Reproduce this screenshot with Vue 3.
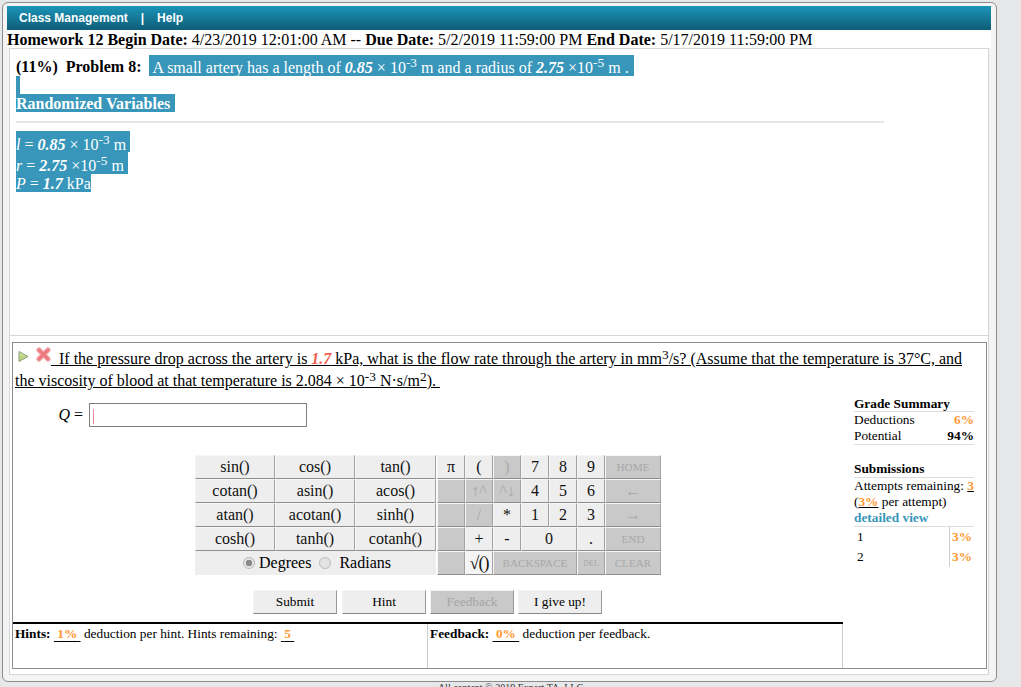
<script setup>
const fnRows = [
  ['sin()', 'cos()', 'tan()'],
  ['cotan()', 'asin()', 'acos()'],
  ['atan()', 'acotan()', 'sinh()'],
  ['cosh()', 'tanh()', 'cotanh()'],
]
const keys = [
  { t: 'π', c: 1 }, { t: '(', c: 1 }, { t: ')', c: 1, off: true }, { t: '7', c: 1 }, { t: '8', c: 1 }, { t: '9', c: 1 }, { t: 'HOME', c: 2, off: true, small: true },
  { t: '', c: 1, off: true }, { t: '↑^', c: 1, off: true }, { t: '^↓', c: 1, off: true }, { t: '4', c: 1 }, { t: '5', c: 1 }, { t: '6', c: 1 }, { t: '←', c: 2, off: true },
  { t: '', c: 1, off: true }, { t: '/', c: 1, off: true }, { t: '*', c: 1 }, { t: '1', c: 1 }, { t: '2', c: 1 }, { t: '3', c: 1 }, { t: '→', c: 2, off: true },
  { t: '', c: 1, off: true }, { t: '+', c: 1 }, { t: '-', c: 1 }, { t: '0', c: 2 }, { t: '.', c: 1 }, { t: 'END', c: 2, off: true, small: true },
  { t: '', c: 1, off: true }, { t: '√()', c: 1, big: true }, { t: 'BACKSPACE', c: 3, off: true, small: true }, { t: 'DEL', c: 1, off: true, tiny: true }, { t: 'CLEAR', c: 2, off: true, small: true },
]
</script>

<template>
  <div class="page">
    <nav class="nav"><span>Class Management</span><span class="sep">|</span><span>Help</span></nav>
    <div class="dates">
      <b>Homework 12 Begin Date:</b> 4/23/2019 12:01:00 AM -- <b>Due Date:</b> 5/2/2019 11:59:00 PM <b>End Date:</b> 5/17/2019 11:59:00 PM
    </div>
    <div class="frame">
      <section class="problem">
        <div class="statement">
          <b class="pct">(11%)&nbsp; Problem 8:</b>
          <span class="hl intro">A small artery has a length of <b><i>0.85</i></b> × 10<sup>-3</sup> m and a radius of <b><i>2.75</i></b> ×10<sup>-5</sup> m .</span>
        </div>
        <div class="hl stub"></div>
        <b class="hl heading">Randomized Variables</b>
        <hr class="rule" />
        <div class="vars">
          <span class="hl v1"><i>l</i> = <b><i>0.85</i></b> × 10<sup>-3</sup> m</span>
          <span class="hl v2"><i>r</i> = <b><i>2.75</i></b> ×10<sup>-5</sup> m</span>
          <span class="hl v3"><i>P</i> = <b><i>1.7</i></b> kPa</span>
        </div>
      </section>
      <section class="question">
        <p class="qtext">
          <svg class="play" width="11" height="13" viewBox="0 0 11 13"><defs><linearGradient id="pg" x1="0" y1="0" x2="0" y2="1"><stop offset="0" stop-color="#d6e8a8" /><stop offset="1" stop-color="#a8cc66" /></linearGradient></defs><path d="M1 1.500 10 6.500 1 11.500Z" fill="url(#pg)" stroke="#8f9f80" stroke-width="1" /></svg>
          <svg class="cross" width="15" height="15" viewBox="0 0 15 15"><path d="M3 3 12 12M12 3 3 12" fill="none" stroke="#f3bcbd" stroke-width="5.500" stroke-linecap="round" /><path d="M3 3 12 12M12 3 3 12" fill="none" stroke="#ec7a80" stroke-width="3.200" stroke-linecap="round" /></svg><u>&nbsp;&nbsp;If the pressure drop across the artery is <b class="red"><i>1.7</i></b> kPa, what is the flow rate through the artery in mm<sup>3</sup>/s? (Assume that the temperature is 37°C, and the viscosity of blood at that temperature is 2.084 × 10<sup>-3</sup> N·s/m<sup>2</sup>).&nbsp;</u>
        </p>
        <div class="body">
          <div class="main">
            <div class="answer">
              <span class="qlabel"><i>Q</i> =</span>
              <div class="input"><span class="caret"></span></div>
            </div>
            <div class="pad">
              <div class="fns">
                <div class="fngrid">
                  <template v-for="(row, r) in fnRows" :key="r">
                    <div v-for="f in row" :key="f" class="fn">{{ f }}</div>
                  </template>
                </div>
                <div class="modes">
                  <span class="radio on"></span><span class="mode">Degrees</span>
                  <span class="radio"></span><span class="mode">Radians</span>
                </div>
              </div>
              <div class="keys">
                <div
                  v-for="(k, i) in keys"
                  :key="i"
                  class="key"
                  :class="{ off: k.off, small: k.small, tiny: k.tiny, big: k.big, c2: k.c === 2, c3: k.c === 3 }"
                >{{ k.t }}</div>
              </div>
            </div>
            <div class="actions">
              <div class="btn">Submit</div>
              <div class="btn">Hint</div>
              <div class="btn dis">Feedback</div>
              <div class="btn">I give up!</div>
            </div>
            <div class="info">
              <div class="cell hints"><b>Hints:</b> <u class="val">&nbsp;<b>1%</b>&nbsp;</u> deduction per hint. Hints remaining: <u class="val">&nbsp;<b>5</b>&nbsp;</u></div>
              <div class="cell feedback"><b>Feedback:</b> <u class="val">&nbsp;<b>0%</b>&nbsp;</u> deduction per feedback.</div>
            </div>
          </div>
          <aside class="side">
            <h4>Grade Summary</h4>
            <div class="row"><span>Deductions</span><b class="or">6%</b></div>
            <div class="row last"><span>Potential</span><b>94%</b></div>
            <h4 class="sub">Submissions</h4>
            <div class="att">
              <div class="line">Attempts remaining: <u><b class="or">3</b></u></div>
              <div class="line">(<u><b class="or">3%</b></u> per attempt)</div>
              <div class="line link">detailed view</div>
            </div>
            <div class="tries">
              <div class="try"><span>1</span><b class="or">3%</b></div>
              <div class="try"><span>2</span><b class="or">3%</b></div>
            </div>
          </aside>
        </div>
      </section>
    </div>
  </div>
  <div class="copyright">All content © 2019 Expert TA, LLC</div>
</template>

<style>
html, body { margin: 0; background: #e6e7e9; overflow: hidden; }
</style>

<style scoped>
.page {
  box-sizing: border-box;
  width: 995px;
  height: 680px;
  margin: 2px 0 0 2px;
  padding: 3px 5px 0 4px;
  background: #f4f4f4;
  border: 1px solid #8c8c8c;
  border-radius: 6px;
  font-family: "Liberation Serif", serif;
  color: #000;
}
.nav {
  height: 24px;
  box-sizing: border-box;
  padding: 5px 0 0 12px;
  background: linear-gradient(#1b95b8, #0f5d78);
  color: #fff;
  font: bold 12px/14px "Liberation Sans", sans-serif;
}
.sep { margin: 0 13px; }
.dates {
  height: 18px;
  background: #fff;
  font-size: 16px;
  line-height: 20px;
  white-space: nowrap;
}
.frame {
  box-sizing: border-box;
  width: 980px;
  height: 627px;
  margin-left: 2px;
  background: #fff;
  border: 1px solid #d5d5d5;
}
.problem {
  box-sizing: border-box;
  height: 287px;
  padding: 6px 6px 0;
  border-bottom: 1px solid #d5d5d5;
  font-size: 16px;
  line-height: 18px;
}
.statement { height: 21px; white-space: nowrap; line-height: 23px; }
.pct { margin-right: 4px; }
.hl { background: #3796ba; color: #fff; }
.intro { display: inline-block; padding: 0 5px 0 3px; height: 21px; line-height: 25px; margin-left: 4px; vertical-align: top; }
sup { font-size: 13.330px; line-height: 0; vertical-align: 6px; }
.stub { width: 4px; height: 18px; }
.heading { display: block; width: fit-content; height: 18px; line-height: 19px; padding-right: 5px; }
.rule { width: 868px; height: 2px; border: 0; margin: 9px 0 8px; background: #e6e6e6; }
.vars { display: flex; flex-direction: column; align-items: flex-start; }
.vars .hl { white-space: nowrap; display: block; }
.v1 { height: 21px; line-height: 27px; padding-right: 4px; }
.v2 { height: 22px; line-height: 27px; padding-right: 4px; }
.v3 { height: 18px; line-height: 19px; }
.question {
  box-sizing: border-box;
  width: 975px;
  height: 327px;
  margin: 6px 0 0 2px;
  background: #fff;
  border: 1px solid #8c8c8c;
}
.qtext {
  margin: 0;
  width: 965px;
  padding: 4px 0 0 2px;
  height: 45px;
  font-size: 16px;
  line-height: 22px;
  box-sizing: border-box;
}
.qtext sup { vertical-align: 5px; }
.play { vertical-align: 1px; margin-left: 3px; margin-right: 7px; }
.cross { vertical-align: 2px; }
.red { color: #f2604f; }
.body { display: flex; }
.main { width: 830px; flex: none; }
.answer { display: flex; align-items: center; margin-top: 15px; height: 24px; }
.qlabel { width: 70px; text-align: right; font-size: 16px; margin-right: 6px; flex: none; }
.input {
  box-sizing: border-box;
  width: 218px;
  height: 24px;
  border: 1px solid #808080;
  padding: 5px 3px 0;
}
.caret { display: block; width: 1px; height: 15px; background: #e58a9a; }
.pad { display: flex; margin: 28px 0 0 182px; width: 470px; }
.fns { width: 241px; background: #eee; flex: none; }
.fngrid { display: grid; grid-template-columns: 80px 80px 81px; grid-auto-rows: 24px; }
.fn, .key {
  box-sizing: border-box;
  display: flex;
  align-items: center;
  justify-content: center;
  background: #eee;
  border-right: 1px solid #a2a2a2;
  border-bottom: 1px solid #8e8e8e;
  border-top: 1px solid #f6f6f6;
  border-left: 1px solid #f6f6f6;
  font-size: 16px;
  color: #111;
}
.modes { display: flex; align-items: center; height: 24px; font-size: 16px; padding-left: 48px; }
.radio {
  box-sizing: border-box;
  width: 12px;
  height: 12px;
  flex: none;
  border-radius: 50%;
  background: #e3e3e3;
  border: 1px solid #bbb;
}
.radio.on { background: radial-gradient(circle, #8a8a8a 0 3px, #e3e3e3 3.500px); }
.mode { margin: 0 8px 0 4px; }
.mode:last-child { margin: 0 0 0 8px; }
.keys {
  display: grid;
  grid-template-columns: repeat(8, 28px);
  grid-auto-rows: 24px;
  width: 224px;
  margin-left: 1px;
}
.key.c2 { grid-column: span 2; }
.key.c3 { grid-column: span 3; }
.key.off { background: #c9c9c9; color: #a8a8a8; }
.key.small { font-size: 11.200px; }
.key.tiny { font-size: 8px; }
.key.big { font-size: 18px; letter-spacing: -1px; background: #f4f4f4; }
.actions { display: flex; gap: 4px; margin: 15px 0 0 240px; }
.btn {
  box-sizing: border-box;
  width: 84px;
  height: 24px;
  display: flex;
  align-items: center;
  justify-content: center;
  background: #eee;
  border: 1px solid #f6f6f6;
  border-right-color: #999;
  border-bottom-color: #888;
  font-size: 13.330px;
}
.btn:first-child { margin-right: 1px; }
.btn.dis { background: #c9c9c9; color: #a5a5a5; }
.info {
  display: flex;
  box-sizing: border-box;
  width: 830px;
  height: 46px;
  margin-top: 8px;
  border-top: 2px solid #000;
  font-size: 13.330px;
  line-height: 16px;
}
.cell { padding: 2px; box-sizing: border-box; white-space: nowrap; }
.hints { width: 415px; border-right: 1px solid #ccc; }
.feedback { border-right: 1px solid #ccc; flex: 1; }
.val b { color: #f93; }
.val { text-underline-offset: 3px; }
.side { margin-left: 11px; width: 120px; font-size: 13.330px; line-height: 16px; padding-top: 8px; }
.side h4 { margin: 0; font-size: 13.330px; line-height: 15px; border-bottom: 1px solid #ddd; font-weight: bold; }
.side h4.sub { margin-top: 16px; line-height: 16px; }
.row { display: flex; justify-content: space-between; }
.row.last { border-bottom: 1px solid #ddd; }
.or { color: #f93; }
.att { border-bottom: 1px solid #ddd; }
.line { white-space: nowrap; }
.link { color: #3796ba; font-weight: bold; }
.try { display: flex; justify-content: space-between; height: 20px; line-height: 20px; padding: 0 2px 0 3px; }
.tries { background: linear-gradient(#ccc, #ccc) 95px 0 / 1px 100% no-repeat; }
.copyright {
  width: 1021px;
  text-align: center;
  font-family: "Liberation Serif", serif;
  font-size: 10px;
  line-height: 12px;
  color: #333;
  white-space: nowrap;
}
</style>
